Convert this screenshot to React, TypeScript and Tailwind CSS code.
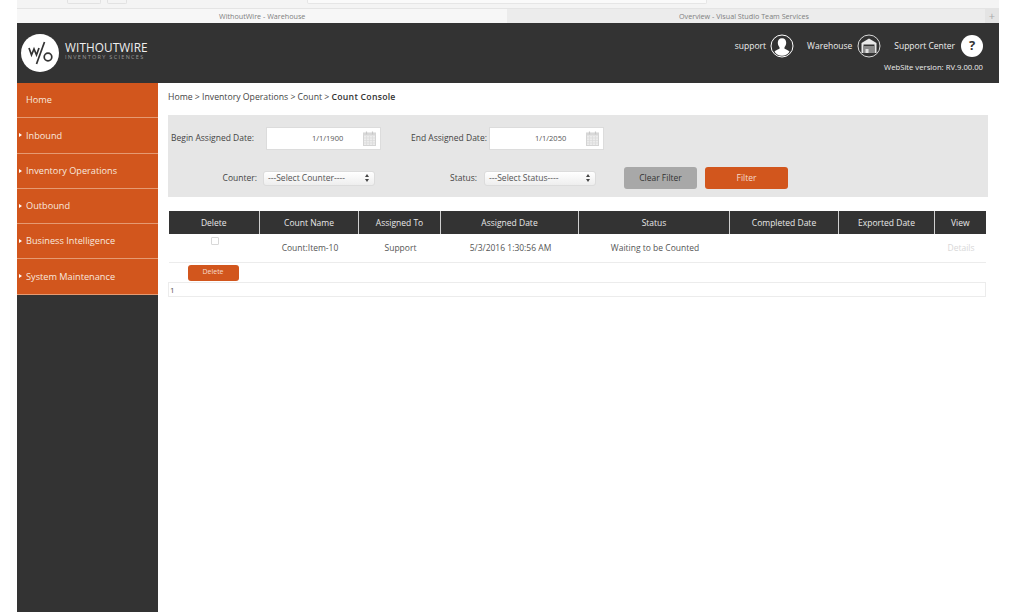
const menu = [
  { label: "Home", arrow: false },
  { label: "Inbound", arrow: true },
  { label: "Inventory Operations", arrow: true },
  { label: "Outbound", arrow: true },
  { label: "Business Intelligence", arrow: true },
  { label: "System Maintenance", arrow: true },
];

const columns = [
  { label: "Delete", className: "w-[91px]" },
  { label: "Count Name", className: "w-[99px]" },
  { label: "Assigned To", className: "w-[82px]" },
  { label: "Assigned Date", className: "w-[138px]" },
  { label: "Status", className: "w-[151px]" },
  { label: "Completed Date", className: "w-[109px]" },
  { label: "Exported Date", className: "w-[96px]" },
  { label: "View", className: "w-[51px]" },
];

function CalendarIcon() {
  return (
    <svg viewBox="0 0 13 15" className="h-[15px] w-[13px]">
      <rect x="0.500" y="2" width="12" height="12.500" fill="#ececec" stroke="#d4d4d4" />
      <rect x="0.500" y="2" width="12" height="2.500" fill="#d8d8d8" />
      <path d="M3.500 0.500v3M9.500 0.500v3" stroke="#c8c8c8" strokeWidth="1.200" />
      <path d="M1 7h11M1 9.500h11M1 12h11M3.500 5v9M6.500 5v9M9.500 5v9" stroke="#d8d8d8" strokeWidth="0.600" />
    </svg>
  );
}

function DateField({ value }: { value: string }) {
  return (
    <div className="flex h-[23px] w-[115px] items-center border border-[#dcdcdc] bg-white pl-[45px] pr-[4px]">
      <span className="flex-1 pt-[1px] text-[7.500px] text-[#555]">{value}</span>
      <CalendarIcon />
    </div>
  );
}

function SelectField({ label }: { label: string }) {
  return (
    <div className="flex h-[15px] w-[112px] items-center rounded-[3px] border border-[#dcdcdc] bg-gradient-to-b from-white to-[#eeeeee] pl-[4px] pr-[5px]">
      <span className="flex-1 text-[8.500px] text-[#555]">{label}</span>
      <svg viewBox="0 0 4 8" className="h-[8px] w-[4px]">
        <path d="M2 0l2 3H0zM2 8L0 5h4z" fill="#444" />
      </svg>
    </div>
  );
}

function UserIcon() {
  return (
    <svg viewBox="0 0 24 24" className="h-[24px] w-[24px]">
      <circle cx="12" cy="12" r="11" fill="none" stroke="#fff" strokeWidth="1" />
      <path
        d="M12 4.200c-2.800 0-4.200 2-4.200 4.600 0 1.800.8 3.400 1.700 4.400v1.500c-1.500.8-4 1.300-5 3 1.700 2.400 4.400 4 7.500 4s5.800-1.600 7.500-4c-1-1.700-3.500-2.200-5-3v-1.500c.9-1 1.700-2.600 1.700-4.400 0-2.600-1.400-4.600-4.200-4.600z"
        fill="#fff"
      />
    </svg>
  );
}

function WarehouseIcon() {
  return (
    <svg viewBox="0 0 24 24" className="h-[24px] w-[24px]">
      <circle cx="12" cy="12" r="11" fill="none" stroke="#d8d8d8" strokeWidth="1" />
      <path d="M4.500 19V9l7.500-4.500L19.500 9v10h-2V10.500h-11V19z" fill="#e8e8e8" />
      <rect x="7" y="12" width="10" height="7" fill="#8a8a8a" />
      <rect x="8.500" y="15" width="3" height="4" fill="#e0e0e0" />
    </svg>
  );
}

function Logo() {
  return (
    <div className="flex h-[38px] w-[38px] items-center justify-center rounded-full bg-white">
      <svg viewBox="0 0 38 38" className="h-[38px] w-[38px]">
        <path d="M8 14l2.500 7 2.500-6 2.500 6 2.500-7" fill="none" stroke="#333" strokeWidth="1.700" />
        <path d="M23.500 8L15.500 30" fill="none" stroke="#333" strokeWidth="1.700" />
        <circle cx="27" cy="23" r="3.800" fill="none" stroke="#333" strokeWidth="1.700" />
      </svg>
    </div>
  );
}

export default function App() {
  return (
    <div className="h-[612px] w-[1022px] overflow-hidden bg-white pl-[17px] pr-[23px] font-['Open_Sans',sans-serif]">
      {/* Browser chrome */}
      <div className="flex h-[8px] items-start bg-[#f4f4f4] pl-[50px]">
        <div className="h-[4px] w-[34px] rounded-b-[2px] border border-t-0 border-[#e2e2e2]" />
        <div className="ml-[6px] h-[4px] w-[20px] rounded-b-[2px] border border-t-0 border-[#e2e2e2]" />
        <div className="ml-[180px] h-[4px] w-[400px] rounded-b-[2px] border border-t-0 border-[#e6e6e6] bg-[#fafafa]" />
      </div>
      <div className="flex h-[15px] items-center border-t border-[#e4e4e4] text-[7.200px] text-[#808080]">
        <div className="flex h-full w-[490px] items-center bg-[#f7f7f7] pl-[202px]">WithoutWire - Warehouse</div>
        <div className="flex h-full w-[478px] items-center bg-[#ececec] pl-[172px]">Overview - Visual Studio Team Services</div>
        <div className="flex h-full flex-1 items-center justify-center bg-[#e4e4e4] text-[11px] text-[#aaa]">+</div>
      </div>

      {/* Header */}
      <header className="flex h-[60px] justify-between bg-[#333333] text-white">
        <div className="flex items-center pb-[1px] pl-[4px]">
          <Logo />
          <div className="mb-[5px] ml-[6px]">
            <div className="text-[11.800px] font-medium leading-[14px] tracking-[0.1px] text-[#f0f0f0]">WITHOUTWIRE</div>
            <div className="text-[5.500px] leading-[7px] tracking-[1.300px] text-[#999]">INVENTORY SCIENCES</div>
          </div>
        </div>
        <div className="flex flex-col items-end pr-[16px] pt-[11px]">
          <div className="flex items-center text-[8.500px] font-medium text-[#eeeeee]">
            <span>support</span>
            <span className="ml-[4px]"><UserIcon /></span>
            <span className="ml-[13px]">Warehouse</span>
            <span className="ml-[5px]"><WarehouseIcon /></span>
            <span className="ml-[13px]">Support Center</span>
            <span className="ml-[6px] flex h-[22px] w-[22px] items-center justify-center rounded-full bg-white text-[13px] font-bold text-[#333]">?</span>
          </div>
          <div className="mt-[4px] text-[7.700px] font-medium text-[#eeeeee]">WebSite version: RV.9.00.00</div>
        </div>
      </header>

      <div className="flex h-[529px]">
        {/* Sidebar */}
        <nav className="h-full w-[141px] shrink-0 bg-[#333333]">
          {menu.map((item) => (
            <div
              key={item.label}
              className="relative flex h-[35.300px] items-center border-b border-[#e59a72] bg-[#d2561d] pl-[9px] text-[9.200px] text-[#f8e8df]"
            >
              {item.arrow && (
                <span className="absolute left-[2px] top-[15px] h-0 w-0 border-y-[2.500px] border-l-[3px] border-y-transparent border-l-white" />
              )}
              {item.label}
            </div>
          ))}
        </nav>

        {/* Main */}
        <main className="min-w-0 flex-1 pl-[10px] pr-[11px]">
          <div className="flex h-[32px] items-center pb-[2px] text-[8.700px] text-[#444]">
            Home &gt; Inventory Operations &gt; Count &gt;&nbsp;<b className="font-semibold tracking-[0.25px] text-[#333]">Count Console</b>
          </div>

          {/* Filter panel */}
          <div className="h-[82px] w-[820px] bg-[#e6e6e6] text-[8.500px] text-[#444]">
            <div className="flex items-center pl-[3px] pt-[12px]">
              <span className="w-[95px]">Begin Assigned Date:</span>
              <DateField value="1/1/1900" />
              <span className="ml-[30px] w-[78px]">End Assigned Date:</span>
              <DateField value="1/1/2050" />
            </div>
            <div className="flex items-center pt-[17px]">
              <span className="w-[89px] text-right">Counter:</span>
              <span className="ml-[6px]"><SelectField label="---Select Counter----" /></span>
              <span className="ml-[75px] w-[28px]">Status:</span>
              <span className="ml-[6px]"><SelectField label="---Select Status----" /></span>
              <button className="ml-[28px] h-[22px] w-[73px] rounded-[3px] bg-[#a8a8a8] text-[8.500px] font-medium text-[#333]">Clear Filter</button>
              <button className="ml-[8px] h-[22px] w-[83px] rounded-[3px] bg-[#d2561d] text-[8.500px] font-medium text-[#f6dccd]">Filter</button>
            </div>
          </div>

          {/* Count table */}
          <table className="mt-[14px] w-[817px] table-fixed border-collapse text-[8.500px] text-[#555]">
            <thead>
              <tr className="h-[23px] bg-[#333333] text-[#e8e8e8]">
                {columns.map((col) => (
                  <th key={col.label} className={`${col.className} border-l border-[#d0d0d0] pt-[1px] font-medium first:border-l-0`}>
                    {col.label}
                  </th>
                ))}
              </tr>
            </thead>
            <tbody>
              <tr className="h-[28px] border-b border-[#ececec] text-center">
                <td className="pb-[14px] pl-[2px] align-middle">
                  <span className="inline-block h-[8px] w-[8px] rounded-[1px] border border-[#d8d8d8] bg-white align-middle" />
                </td>
                <td className="pl-[2px] pt-[2px]">Count:Item-10</td>
                <td className="pl-[2px] pt-[2px]">Support</td>
                <td className="pl-[2px] pt-[2px]">5/3/2016 1:30:56 AM</td>
                <td className="pl-[2px] pt-[2px]">Waiting to be Counted</td>
                <td></td>
                <td></td>
                <td className="pl-[2px] pt-[2px] text-[#d8d8d8]">Details</td>
              </tr>
              <tr className="h-[20px] border-b border-[#ececec]">
                <td colSpan={8} className="pl-[19px] pt-[1px]">
                  <button className="block h-[16px] w-[51px] rounded-[3px] bg-[#d2561d] text-[7px] font-medium text-[#f6dccd]">Delete</button>
                </td>
              </tr>
              <tr className="h-[14px] border-x border-b border-[#ececec]">
                <td colSpan={8} className="pl-[1px] text-[8px] leading-[13px]">1</td>
              </tr>
            </tbody>
          </table>
        </main>
      </div>
    </div>
  );
}
